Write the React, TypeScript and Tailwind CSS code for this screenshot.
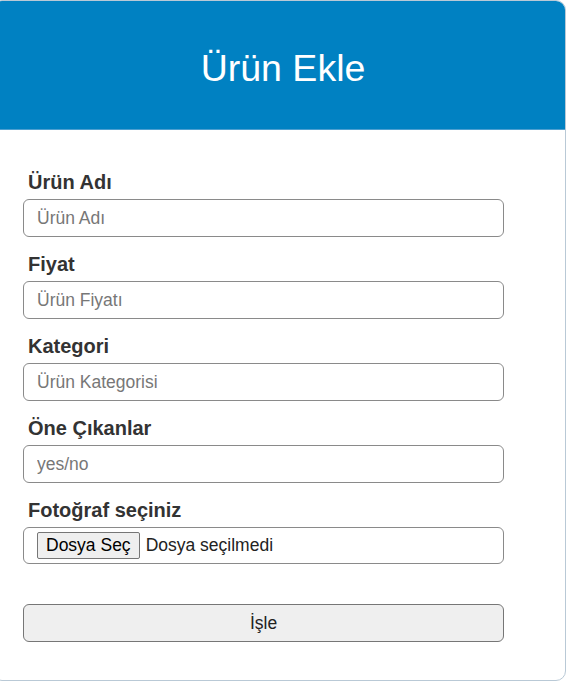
const fields = [
  { label: 'Ürün Adı', placeholder: 'Ürün Adı' },
  { label: 'Fiyat', placeholder: 'Ürün Fiyatı' },
  { label: 'Kategori', placeholder: 'Ürün Kategorisi' },
  { label: 'Öne Çıkanlar', placeholder: 'yes/no' },
];

export default function App() {
  return (
    <div className="w-[568px] h-[682px] bg-white overflow-hidden font-['Liberation_Sans',Arial,sans-serif]">
      <div className="-ml-[8px] w-[574px] h-[681px] border border-[#b9c9d6] rounded-[10px] overflow-hidden bg-white">
        {/* Header */}
        <div className="h-[129px] bg-[#0081c2] border-b border-[#4d9fd0] flex items-center justify-center pt-[8px] pl-[8px]">
          <h1 className="text-white text-[37.5px] leading-none">Ürün Ekle</h1>
        </div>

        {/* Form */}
        <div className="pt-[41px] pl-[30px]">
          {fields.map((f) => (
            <div key={f.label} className="mb-[16px]">
              <div className="ml-[5px] mb-[6px] h-[22px] text-[20px] leading-[22px] font-bold text-[#333]">
                {f.label}
              </div>
              <input
                placeholder={f.placeholder}
                className="w-[481px] h-[38px] border border-[#8a8a8a] rounded-[6px] px-[13px] text-[17.5px] text-[#333] placeholder:text-[#777] outline-none"
              />
            </div>
          ))}

          <div className="mb-[40px]">
            <div className="ml-[5px] mb-[6px] h-[22px] text-[20px] leading-[22px] font-bold text-[#333]">
              Fotoğraf seçiniz
            </div>
            <div className="w-[481px] h-[37px] border border-[#8a8a8a] rounded-[6px] px-[13px] flex items-center gap-[6px]">
              <span className="h-[27px] px-[8px] bg-[#efefef] border border-[#767676] rounded-[2px] flex items-center text-[17.5px] text-black">
                Dosya Seç
              </span>
              <span className="text-[17.5px] text-[#222]">Dosya seçilmedi</span>
            </div>
          </div>

          <button className="w-[481px] h-[38px] bg-[#efefef] border border-[#767676] rounded-[6px] text-[17.5px] text-[#222]">
            İşle
          </button>
        </div>
      </div>
    </div>
  );
}
